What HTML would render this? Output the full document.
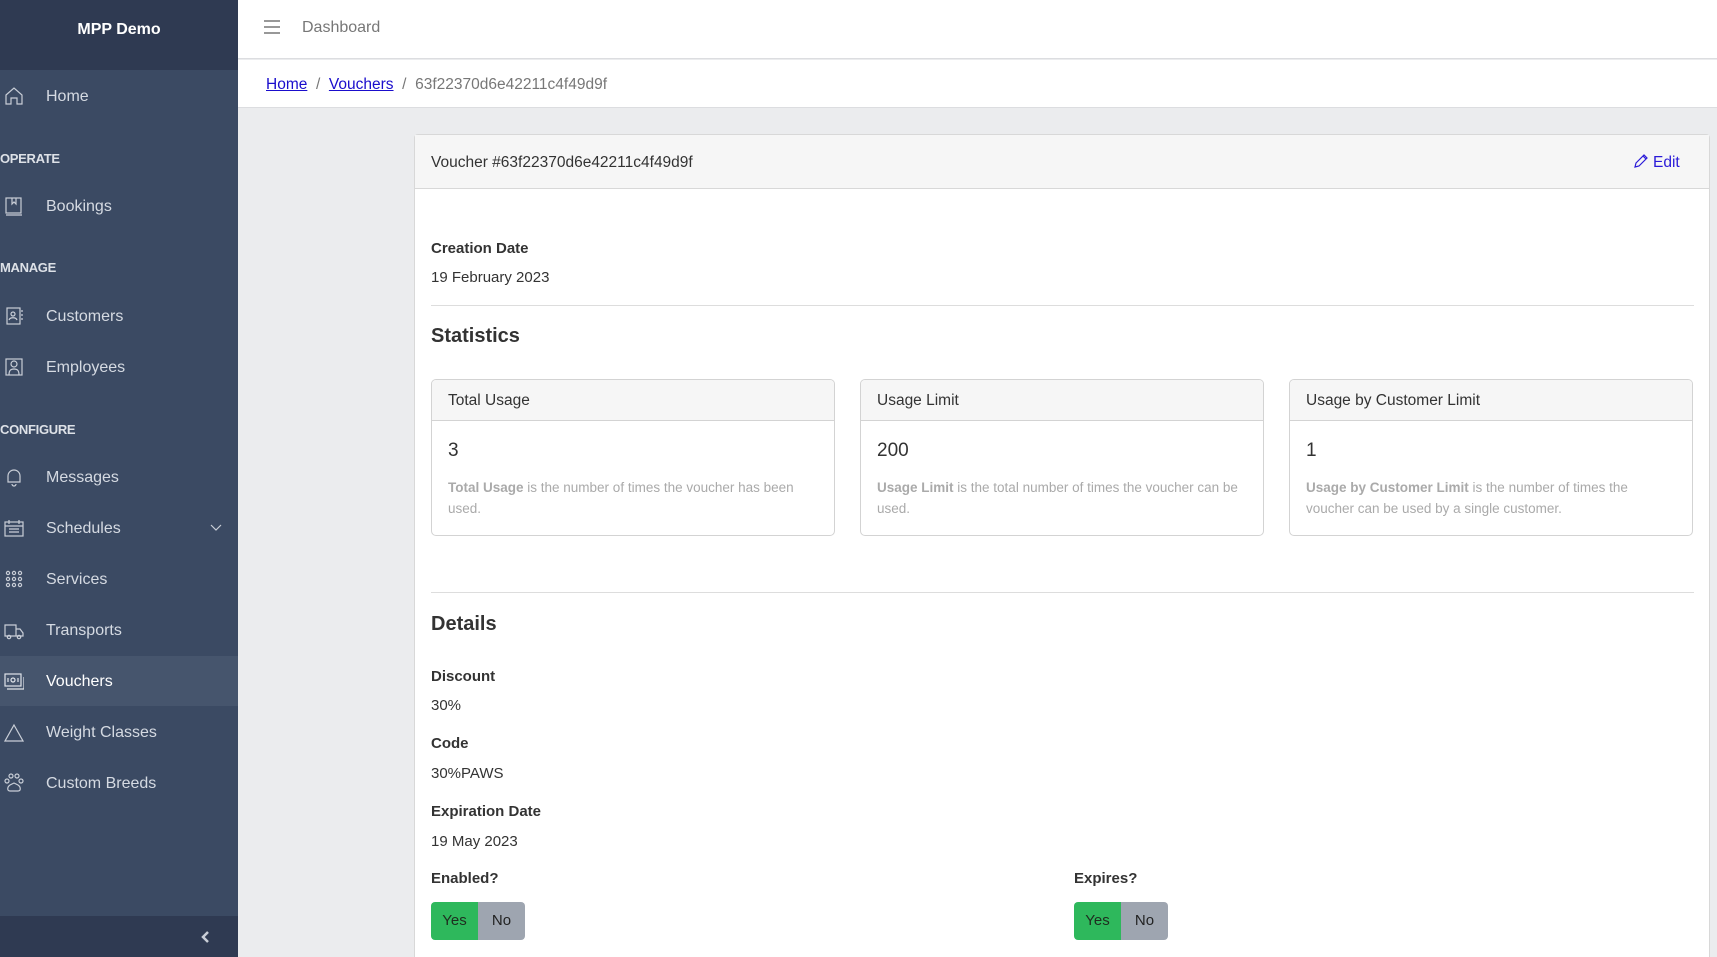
<!DOCTYPE html>
<html><head><meta charset="utf-8"><style>
*{box-sizing:border-box;margin:0;padding:0}
html,body{width:1717px;height:957px;overflow:hidden}
body{font-family:"Liberation Sans",sans-serif;background:#ebecee;position:relative;color:#333}
.a{position:absolute;white-space:nowrap}
#sb{position:absolute;left:0;top:0;width:238px;height:957px;background:#3b4a63}
#sbh{position:absolute;left:0;top:0;width:238px;height:70px;background:#2f3a52;color:#fff;font-weight:bold;font-size:16px;text-align:center;line-height:60px}
#sbf{position:absolute;left:0;top:916px;width:238px;height:41px;background:#2f3a52}
.ni{position:absolute;left:46px;color:#d5dae2;font-size:16px;line-height:20px}
.sec{position:absolute;left:0;color:#dde1e7;font-size:13px;font-weight:bold;line-height:16px;letter-spacing:-0.3px}
.ic{position:absolute;left:4px;width:20px;height:20px}
#top{position:absolute;left:238px;top:0;right:0;height:59px;background:#fff;border-bottom:1px solid #dcdde0}
#bc{position:absolute;left:238px;top:60px;right:0;height:48px;background:#fff;border-bottom:1px solid #dcdde0}
#card{position:absolute;left:414px;top:134px;width:1296px;height:850px;background:#fff;border:1px solid #d8d8d8;border-radius:4px}
#ch{position:absolute;left:0;top:0;right:0;height:54px;background:#f6f6f6;border-bottom:1px solid #d8d8d8}
.lbl{position:absolute;left:16px;font-weight:bold;font-size:15px;color:#333;line-height:20px}
.val{position:absolute;left:16px;font-size:15px;color:#333;line-height:20px}
.hr{position:absolute;left:16px;width:1263px;height:1px;background:#ddd}
.st{position:absolute;top:244px;width:404px;height:157px;border:1px solid #d3d3d3;border-radius:5px;overflow:hidden}
.st .h{height:41px;background:#f6f6f6;border-bottom:1px solid #d3d3d3;padding-left:16px;line-height:41px;font-size:15.5px}
.st .n{position:absolute;left:16px;top:59px;font-size:19px;line-height:24px}
.st .d{position:absolute;left:16px;top:97px;width:370px;font-size:13.5px;line-height:21px;color:#aaa;white-space:normal}
.tg{position:absolute;top:902px;height:38px;width:94px;border-radius:4px;overflow:hidden;font-size:15px;line-height:38px}
.tg span{float:left;text-align:center;height:38px}
</style></head><body>
<div id="sb">
<div id="sbh">MPP Demo</div>
<div style="position:absolute;left:0;top:656px;width:238px;height:50px;background:#46556d"></div>
<svg class="ic" style="top:86px" viewBox="0 0 20 20" fill="none" stroke="#c9ced7" stroke-width="1.2"><path d="M2 9 L10 2 L18 9 V18 H13 V12 H7 V18 H2 Z"/></svg>
<div class="ni" style="top:87px">Home</div>
<div class="sec" style="top:151px">OPERATE</div>
<svg class="ic" style="top:196px" viewBox="0 0 20 20" fill="none" stroke="#c9ced7" stroke-width="1.2"><rect x="2" y="2" width="15" height="15"/><path d="M8 2v6l2-2 2 2V2M2 19h16"/></svg>
<div class="ni" style="top:197px">Bookings</div>
<div class="sec" style="top:260px">MANAGE</div>
<svg class="ic" style="top:306px" viewBox="0 0 20 20" fill="none" stroke="#c9ced7" stroke-width="1.2"><rect x="3" y="2" width="13" height="16"/><circle cx="9" cy="8" r="2"/><path d="M5 14c1-3 7-3 8 0M17 5h2M17 9h2M17 13h2"/></svg>
<div class="ni" style="top:307px">Customers</div>
<svg class="ic" style="top:357px" viewBox="0 0 20 20" fill="none" stroke="#c9ced7" stroke-width="1.2"><rect x="2" y="2" width="16" height="16"/><path d="M5 18c0-5 2-6 5-6s5 1 5 6M7 7a3 3 0 1 0 6 0 3 3 0 1 0-6 0"/></svg>
<div class="ni" style="top:358px">Employees</div>
<div class="sec" style="top:422px">CONFIGURE</div>
<svg class="ic" style="top:467px" viewBox="0 0 20 20" fill="none" stroke="#c9ced7" stroke-width="1.2"><path d="M4 15V9a6 6 0 0 1 12 0v6H4zM8 17a2 2 0 0 0 4 0"/></svg>
<div class="ni" style="top:468px">Messages</div>
<svg class="ic" style="top:518px" viewBox="0 0 20 20" fill="none" stroke="#c9ced7" stroke-width="1.2"><rect x="1" y="4" width="18" height="14"/><path d="M5 2v4M15 2v4M1 8h18M5 11h10M5 14h10"/></svg>
<div class="ni" style="top:519px">Schedules</div>
<svg class="a" style="left:210px;top:524px" width="12" height="8" viewBox="0 0 12 8" fill="none" stroke="#c9ced7" stroke-width="1.2"><path d="M1 1l5 5 5-5"/></svg>
<svg class="ic" style="top:569px" viewBox="0 0 20 20" fill="none" stroke="#c9ced7" stroke-width="1.2"><circle cx="4" cy="4" r="1.6"/><circle cx="10" cy="4" r="1.6"/><circle cx="16" cy="4" r="1.6"/><circle cx="4" cy="10" r="1.6"/><circle cx="10" cy="10" r="1.6"/><circle cx="16" cy="10" r="1.6"/><circle cx="4" cy="16" r="1.6"/><circle cx="10" cy="16" r="1.6"/><circle cx="16" cy="16" r="1.6"/></svg>
<div class="ni" style="top:570px">Services</div>
<svg class="ic" style="top:621px" viewBox="0 0 20 20" fill="none" stroke="#c9ced7" stroke-width="1.2"><path d="M1 4h11v11H1zM12 8h4l3 4v3h-7"/><circle cx="5" cy="16" r="1.7"/><circle cx="15" cy="16" r="1.7"/></svg>
<div class="ni" style="top:621px">Transports</div>
<svg class="ic" style="top:671px" viewBox="0 0 20 20" fill="none" stroke="#dfe3e9" stroke-width="1.2"><rect x="1" y="3" width="16" height="12"/><path d="M3 18h17V6"/><circle cx="9" cy="9" r="2"/><path d="M4 7v4M14 7v4"/></svg>
<div class="ni" style="top:672px;color:#fff">Vouchers</div>
<svg class="ic" style="top:723px" viewBox="0 0 20 20" fill="none" stroke="#c9ced7" stroke-width="1.2"><path d="M10 2L19 18H1Z"/></svg>
<div class="ni" style="top:723px">Weight Classes</div>
<svg class="ic" style="top:773px" viewBox="0 0 20 20" fill="none" stroke="#c9ced7" stroke-width="1.2"><circle cx="7" cy="3" r="2"/><circle cx="13" cy="3" r="2"/><circle cx="3" cy="8" r="2"/><circle cx="17" cy="8" r="2"/><path d="M6 18c-3 0-3-4 0-6l4-2 4 2c3 2 3 6 0 6z"/></svg>
<div class="ni" style="top:774px">Custom Breeds</div>
<div id="sbf"><svg class="a" style="left:200px;top:15px" width="10" height="12" viewBox="0 0 10 12" fill="none" stroke="#c9ced7" stroke-width="2.5"><path d="M8 1L3 6l5 5"/></svg></div>
</div>
<div id="top">
<svg class="a" style="left:26px;top:20px" width="16" height="14" viewBox="0 0 16 14" stroke="#777" stroke-width="1.4"><path d="M0 1h16M0 7h16M0 13h16"/></svg>
<div class="a" style="left:64px;top:18px;font-size:16px;line-height:20px;color:#777">Dashboard</div>
</div>
<div id="bc"><div class="a" style="left:28px;top:15px;font-size:15.5px;line-height:20px;color:#777"><span style="color:#1a0dcc;text-decoration:underline">Home</span>&nbsp; / &nbsp;<span style="color:#1a0dcc;text-decoration:underline">Vouchers</span>&nbsp; / &nbsp;63f22370d6e42211c4f49d9f</div></div>
<div id="card">
<div id="ch">
<div class="a" style="left:16px;top:18px;font-size:15.5px;line-height:20px">Voucher #63f22370d6e42211c4f49d9f</div>
<svg class="a" style="left:1218px;top:18px" width="16" height="16" viewBox="0 0 16 16" fill="none" stroke="#2a1ad8" stroke-width="1.2"><path d="M2 14l1-4L11 2l3 3-8 8zM10 3l3 3"/></svg>
<div class="a" style="left:1238px;top:18px;font-size:15.5px;line-height:20px;color:#2a1ad8">Edit</div>
</div>
<div class="lbl" style="top:104px">Creation Date</div>
<div class="val" style="top:133px">19 February 2023</div>
<div class="hr" style="top:170px"></div>
<div class="a" style="left:16px;top:189px;font-size:20px;font-weight:bold;line-height:24px;color:#333">Statistics</div>
<div class="st" style="left:16px"><div class="h">Total Usage</div><div class="n">3</div><div class="d"><b>Total Usage</b> is the number of times the voucher has been used.</div></div>
<div class="st" style="left:445px"><div class="h">Usage Limit</div><div class="n">200</div><div class="d"><b>Usage Limit</b> is the total number of times the voucher can be used.</div></div>
<div class="st" style="left:874px"><div class="h">Usage by Customer Limit</div><div class="n">1</div><div class="d"><b>Usage by Customer Limit</b> is the number of times the voucher can be used by a single customer.</div></div>
<div class="hr" style="top:457px"></div>
<div class="a" style="left:16px;top:477px;font-size:20px;font-weight:bold;line-height:24px;color:#333">Details</div>
<div class="lbl" style="top:532px">Discount</div>
<div class="val" style="top:561px">30%</div>
<div class="lbl" style="top:599px">Code</div>
<div class="val" style="top:629px">30%PAWS</div>
<div class="lbl" style="top:667px">Expiration Date</div>
<div class="val" style="top:697px">19 May 2023</div>
<div class="lbl" style="top:734px">Enabled?</div>
<div class="lbl" style="top:734px;left:659px">Expires?</div>
</div>
<div class="tg" style="left:431px"><span style="width:47px;background:#2eb85c;color:#1f2d1f">Yes</span><span style="width:47px;background:#9ea5b0;color:#222">No</span></div>
<div class="tg" style="left:1074px"><span style="width:47px;background:#2eb85c;color:#1f2d1f">Yes</span><span style="width:47px;background:#9ea5b0;color:#222">No</span></div>
</body></html>
